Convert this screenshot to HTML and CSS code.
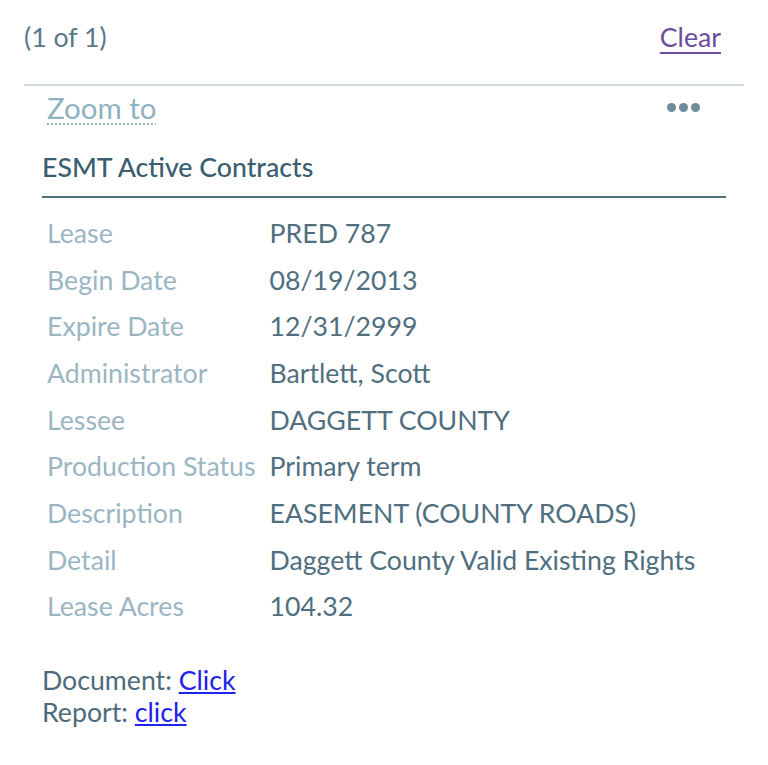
FILE: index.html
```html
<!DOCTYPE html>
<html>
<head>
<meta charset="utf-8">
<link rel="stylesheet" href="styles.css">
</head>
<body>
<div class="panel">
  <div class="header">
    <span class="count">(1 of 1)</span>
    <a class="clear" href="#">Clear</a>
  </div>
  <div class="feature">
    <div class="actions">
      <a class="zoom" href="#">Zoom to</a>
      <span class="more"><i></i><i></i><i></i></span>
    </div>
    <div class="content">
      <h2 class="title">ESMT Active Contracts</h2>
      <table class="attrs">
        <tr><th>Lease</th><td>PRED 787</td></tr>
        <tr><th>Begin Date</th><td>08/19/2013</td></tr>
        <tr><th>Expire Date</th><td>12/31/2999</td></tr>
        <tr><th>Administrator</th><td>Bartlett, Scott</td></tr>
        <tr><th>Lessee</th><td>DAGGETT COUNTY</td></tr>
        <tr><th>Production Status</th><td>Primary term</td></tr>
        <tr><th>Description</th><td>EASEMENT (COUNTY ROADS)</td></tr>
        <tr><th>Detail</th><td>Daggett County Valid Existing Rights</td></tr>
        <tr><th>Lease Acres</th><td>104.32</td></tr>
      </table>
      <div class="links">
        <div>Document: <a href="#">Click</a></div>
        <div>Report: <a href="#">click</a></div>
      </div>
    </div>
  </div>
</div>
</body>
</html>
```
FILE: styles.css
```css
html, body {
  margin: 0;
  padding: 0;
  background: #ffffff;
}
body {
  font-family: Lato, "Noto Sans", sans-serif;
  color: #4d6b7a;
  font-size: 26.7px;
  line-height: 31px;
}
.panel {
  width: 720px;
  margin-left: 24px;
}
.header {
  display: flex;
  justify-content: space-between;
  align-items: flex-start;
  height: 62px;
  padding: 22px 23px 0 0;
  border-bottom: 2px solid #cfdbe1;
}
.count {
  color: #5a7888;
}
.clear {
  color: #6c4c9e;
  text-decoration: underline;
  text-decoration-thickness: 2px;
  text-underline-offset: 5px;
}
.actions {
  display: flex;
  justify-content: space-between;
  align-items: center;
  height: 42px;
  padding: 0 44px 0 23px;
}
.zoom {
  color: #8fb1c1;
  font-size: 29.5px;
  text-decoration: underline dotted;
  text-decoration-thickness: 2px;
  text-underline-offset: 5px;
}
.more {
  display: flex;
  gap: 3px;
}
.more i {
  width: 9px;
  height: 9px;
  border-radius: 50%;
  background: #6e8c9b;
}
.content {
  padding: 0 18px;
}
.title {
  margin: 0;
  font-size: 26.7px;
  font-weight: 500;
  color: #3a5e6f;
  padding: 24px 0 13px;
  border-bottom: 2px solid #4d6f7e;
}
.attrs {
  border-collapse: collapse;
  margin-top: 12px;
}
.attrs th {
  text-align: left;
  font-weight: 400;
  color: #9bb6c3;
  padding: 0 14px 0 5px;
  height: 46.7px;
  white-space: nowrap;
}
.attrs td {
  color: #4f6f7f;
  padding: 0;
}
.links {
  margin-top: 34px;
  line-height: 32px;
  color: #4d6b7a;
}
.links a {
  color: #2222ee;
}
```
